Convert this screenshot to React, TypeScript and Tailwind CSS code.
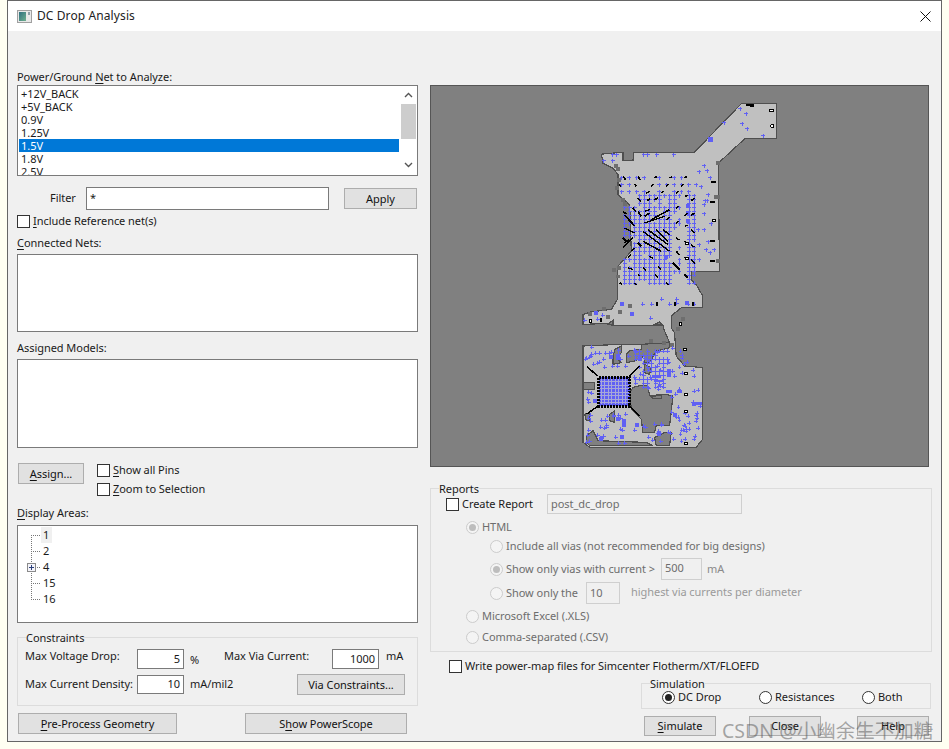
import React from "react";

const pts = (a: number[][]) => a.map((p) => p.join(",")).join(" ");
const U = (x: number, y: number) => [570 + x / 3, 95 + y / 3];
const L = (x: number, y: number) => [570 + x / 3, 300 + y / 3];

const board = [
  U(517, 25), U(622, 25), U(622, 130), U(528, 130), U(447, 205), U(450, 530), U(365, 530), U(365, 555), U(380, 570), U(400, 605),
  L(400, 25), L(335, 25), L(305, 50), L(305, 85), L(315, 100), L(320, 170), L(345, 200), L(400, 205), L(400, 420), L(380, 445), L(60, 445), L(40, 430), L(40, 140),
  L(155, 135), L(215, 135), L(300, 130), L(285, 95), L(280, 78), L(130, 78), L(115, 72), L(40, 75), L(40, 45), L(65, 37), L(125, 30), L(143, 0),
  U(145, 515), U(185, 470), U(180, 330), U(145, 300), U(145, 240), U(130, 220), U(100, 205), U(95, 178), U(160, 172), U(160, 198), U(190, 198), U(192, 172), U(375, 172),
];
const voids = [
  [L(135, 150), L(155, 140), L(155, 160), L(140, 175), L(155, 190), L(130, 195), L(130, 175)],
  [L(180, 155), L(215, 150), L(215, 135), L(300, 130), L(300, 145), L(260, 155), L(240, 190), L(225, 190), L(225, 170), L(195, 185), L(170, 190), L(170, 165)],
  [L(190, 265), L(215, 258), L(235, 260), L(240, 290), L(285, 285), L(310, 290), L(305, 340), L(300, 380), L(260, 380), L(255, 400), L(220, 400), L(215, 360), L(185, 330), L(180, 280)],
  [L(50, 430), L(50, 410), L(70, 395), L(85, 425), L(230, 430), L(250, 440), L(60, 440)],
  [L(255, 415), L(285, 400), L(305, 400), L(300, 440), L(260, 440)],
  [L(40, 250), L(75, 250), L(75, 270), L(40, 270)],
  [L(45, 345), L(60, 340), L(60, 365), L(50, 365)],
  [L(120, 345), L(135, 335), L(135, 370), L(120, 365)],
  [L(115, 75), L(130, 62), L(130, 78)],
  [L(225, 195), L(245, 205), L(240, 225), L(225, 220)],
  [L(255, 75), L(270, 68), L(280, 78)],
  [L(245, 292), L(275, 288), L(275, 298), L(250, 298)],
];

let seed = 7;
const rnd = () => {
  seed = (seed * 16807) % 2147483647;
  return seed / 2147483647;
};

const vias: number[][] = [];
for (let x = 625; x < 697; x += 5) for (let y = 196; y < 287; y += 4) {
  const w = x < 674 || (x > 685 && x < 697);
  if (x < 632 && y > 238 && y < 258) continue;
  if (y < 205 && x < 640) continue;
  if (rnd() < (w ? 0.92 : 0.2)) vias.push([x, y]);
}
for (const y of [178, 185, 192]) for (let x = 622; x < 700; x += 7.5) if (rnd() < 0.7) vias.push([x, y]);
[[613, 155], [617, 155], [613, 161], [644, 155], [648, 155], [657, 155], [674, 155], [604, 161], [705, 166], [700, 172], [708, 171], [711, 178], [702, 187], [709, 195], [708, 201], [705, 205], [706, 201], [705, 214], [712, 224], [699, 230], [705, 230], [709, 242], [700, 245], [707, 250], [715, 250], [700, 260], [711, 253], [725, 123], [741, 109], [747, 114], [743, 124], [748, 129], [764, 136], [662, 300], [677, 300], [677, 304], [643, 305], [652, 305], [670, 305], [689, 305], [695, 305], [585, 321], [603, 316], [598, 320], [651, 319]].forEach((v) => vias.push(v));
for (let i = 0; i < 190; i++) {
  const x = 586 + rnd() * 115;
  const y = 348 + rnd() * 96;
  if (x > 594 && x < 634 && y > 372 && y < 412) continue;
  if (x > 632 && x < 672 && y > 390 && y < 425) continue;
  vias.push([Math.round(x), Math.round(y)]);
}
for (let x = 636; x < 672; x += 4) for (let y = 352; y < 392; y += 4) if (rnd() < 0.6) vias.push([x, y]);

const blobs = [[711, 140, 2.5], [688, 304, 2], [622, 305, 2], [632, 315, 2], [596, 314, 2], [666, 257, 2], [689, 206, 2], [689, 213, 2], [689, 221, 2], [611, 358, 2], [640, 360, 2], [618, 420, 2], [637, 426, 2], [595, 402, 2], [659, 435, 2], [675, 416, 2], [622, 438, 2], [601, 440, 2], [695, 405, 2]];
const bars = [[652, 376, 9, 3], [654, 381, 10, 2], [666, 391, 6, 3], [677, 391, 6, 3], [697, 403, 6, 3], [667, 370, 4, 8], [616, 355, 4, 6], [622, 420, 4, 8], [600, 437, 4, 3]];
const edge = [[616, 166], [618, 169], [619, 180], [617, 188], [623, 200], [625, 204], [619, 268], [614, 270], [618, 277], [719, 163], [719, 197], [717, 197], [719, 261], [604, 310], [590, 315], [630, 307], [608, 318], [651, 342], [664, 344], [672, 346], [684, 320], [678, 330], [620, 313]];

const seg = (z: number[][]) => z.map(([a, b, c, d]) => [...U(a, b), ...U(c, d)]);
const blackSegs = [
  ...seg([
    [220, 410, 300, 470], [235, 405, 295, 450], [220, 440, 275, 470], [260, 405, 295, 440], [280, 405, 300, 420],
    [165, 360, 195, 395], [165, 400, 195, 415], [205, 310, 215, 320], [205, 350, 215, 365], [190, 340, 200, 350], [175, 375, 190, 385],
    [225, 350, 240, 345], [245, 375, 300, 345], [225, 385, 285, 365], [290, 375, 300, 368], [255, 315, 265, 310], [232, 318, 242, 312], [225, 365, 240, 355],
    [345, 440, 355, 448], [365, 450, 375, 458], [345, 487, 355, 495], [365, 495, 378, 507], [365, 405, 375, 415], [320, 430, 330, 437], [320, 470, 330, 480], [310, 505, 330, 525], [265, 515, 275, 525], [220, 520, 230, 528], [175, 520, 190, 525], [255, 540, 265, 548], [345, 540, 355, 550], [150, 565, 158, 570], [195, 565, 200, 572], [290, 565, 297, 570], [205, 540, 210, 545], [160, 460, 190, 430], [185, 470, 195, 460],
    [160, 245, 168, 255], [205, 245, 212, 255], [255, 250, 262, 245], [300, 250, 308, 245], [345, 250, 352, 245], [148, 268, 155, 275], [195, 268, 200, 275], [245, 275, 252, 268], [290, 275, 297, 268], [335, 275, 342, 268], [230, 295, 240, 290], [275, 295, 282, 290], [320, 295, 327, 290], [345, 305, 355, 302], [365, 318, 375, 310], [345, 365, 355, 355], [365, 362, 375, 355], [320, 340, 328, 335], [320, 385, 328, 380], [345, 395, 355, 392],
    [160, 350, 170, 358], [160, 430, 170, 440], [165, 445, 178, 435], [205, 445, 215, 455], [240, 485, 250, 492], [175, 490, 185, 480],
  ]),
  [587, 367, 598, 377], [640, 367, 630, 377], [587, 415, 598, 407], [640, 417, 630, 407],
];

const pads = [[712, 181, 5, 2], [711, 201, 5, 2], [711, 240, 5, 2], [711, 260, 5, 2], [656, 303, 2, 4], [674, 303, 2, 4], [693, 303, 2, 4], [600, 319, 2, 4]];
const holes = [[713, 220, 3, 2], [751, 105, 3, 2], [770, 110, 4, 2], [590, 320, 2, 3], [680, 323, 2, 3], [684, 349, 3, 2], [685, 373, 3, 2], [685, 394, 3, 2], [685, 411, 3, 2], [685, 443, 3, 2], [686, 243, 3, 2], [686, 258, 3, 2]];

function Board() {
  return (
    <svg viewBox="431 86 498 381" className="block w-full h-full" shapeRendering="crispEdges">
      <polygon points={pts(board)} fill="#c0c0c0" stroke="#4f4f4f" strokeWidth="1.2" />
      {voids.map((v, i) => <polygon key={i} points={pts(v)} fill="#808080" stroke="#4f4f4f" strokeWidth="1.2" />)}
      {edge.map(([x, y], i) => <rect key={i} x={x - 2} y={y - 2} width={4} height={4} fill="#6e6e6e" />)}
      {vias.map(([x, y], i) => (
        <g key={i} fill="#6060f4">
          <rect x={x - 2} y={y - 0.5} width={4} height={1} />
          <rect x={x - 0.5} y={y - 2} width={1} height={4} />
        </g>
      ))}
      {blobs.map(([x, y, r], i) => <rect key={i} x={x - r} y={y - r} width={r * 2} height={r * 2} fill="#6060f4" />)}
      {bars.map(([x, y, w, h], i) => <rect key={i} x={x} y={y} width={w} height={h} fill="#6060f4" />)}
      {blackSegs.map(([a, b, c, d], i) => <line key={i} x1={a} y1={b} x2={c} y2={d} stroke="#000" strokeWidth="1.5" />)}
      {pads.map(([x, y, w, h], i) => <rect key={i} x={x} y={y} width={w} height={h} fill="#000" />)}
      {holes.map(([x, y, w, h], i) => <rect key={i} x={x} y={y} width={w} height={h} fill="#fff" stroke="#000" strokeWidth="1" />)}
      <rect x="747" y="104" width="7" height="2" fill="#000" />
      <circle cx="773" cy="126" r="1.7" fill="#fff" stroke="#000" />
      <rect x="599" y="378" width="31" height="29" fill="#6060f4" stroke="#000" strokeWidth="3" strokeDasharray="2 1" />
      {[0, 1, 2, 3, 4, 5, 6, 7].map((i) => <rect key={i} x={601 + i * 3.5} y={380} width="1" height="25" fill="#a8a8d8" />)}
      {[0, 1, 2, 3, 4, 5, 6].map((i) => <rect key={i} x={600} y={382 + i * 3.5} width="29" height="1" fill="#a8a8d8" />)}
    </svg>
  );
}

const U_ = ({ c }: { c: string }) => <span className="underline underline-offset-2">{c}</span>;

function Btn({ className, children }: { className: string; children: React.ReactNode }) {
  return (
    <button className={`flex items-center justify-center bg-[#e1e1e1] border border-[#adadad] text-[#111] shrink-0 ${className}`}>{children}</button>
  );
}

function Check({ children, className = "" }: { children: React.ReactNode; className?: string }) {
  return (
    <div className={`flex items-center h-[14px] ${className}`}>
      <span className="w-[13px] h-[13px] bg-white border border-[#333] shrink-0" />
      <span className="ml-[3px] whitespace-nowrap">{children}</span>
    </div>
  );
}

function Radio({ on, off, children, className = "" }: { on?: boolean; off?: boolean; children: React.ReactNode; className?: string }) {
  return (
    <div className={`flex items-center ${className}`}>
      <span className={`w-[13px] h-[13px] rounded-full border flex items-center justify-center shrink-0 ${off ? "border-[#cccccc] bg-[#f4f4f4]" : "border-[#333] bg-white"}`}>
        {on && <span className={`w-[7px] h-[7px] rounded-full ${off ? "bg-[#bdbdbd]" : "bg-[#222]"}`} />}
      </span>
      <span className={`ml-[3px] whitespace-nowrap ${off ? "text-[#6d6d6d]" : ""}`}>{children}</span>
    </div>
  );
}

function Group({ title, className, children }: { title: string; className: string; children: React.ReactNode }) {
  return (
    <div className={`relative border border-[#dcdcdc] ${className}`}>
      <span className="absolute -top-[7px] left-[8px] bg-[#f0f0f0] leading-[14px] whitespace-nowrap">{title}</span>
      {children}
    </div>
  );
}

function TreeRow({ label, first, last, plus, sel }: { label: string; first?: boolean; last?: boolean; plus?: boolean; sel?: boolean }) {
  return (
    <div className="flex h-[16px] items-center">
      <svg width="23" height="16" className="shrink-0" shapeRendering="crispEdges">
        <line x1="13.5" y1={first ? 8 : 0} x2="13.5" y2={last ? 8 : 16} stroke="#777" strokeDasharray="1 1" />
        <line x1="13" y1="8.5" x2="23" y2="8.5" stroke="#777" strokeDasharray="1 1" />
        {plus && (
          <g>
            <rect x="9.5" y="4.5" width="8" height="8" fill="#f4f4fa" stroke="#8a8a8a" />
            <rect x="11" y="8" width="5" height="1" fill="#2b3f7a" />
            <rect x="13" y="6" width="1" height="5" fill="#2b3f7a" />
          </g>
        )}
      </svg>
      <span className={`h-[16px] leading-[16px] pl-[2px] pr-[3px] ${sel ? "bg-[#f0f0f0]" : ""}`}>{label}</span>
    </div>
  );
}

const inputCls = "bg-white border border-[#7a7a7a] flex items-center shrink-0";

export default function App() {
  const items = ["+12V_BACK", "+5V_BACK", "0.9V", "1.25V", "1.5V", "1.8V", "2.5V"];
  return (
    <div className="relative w-[949px] h-[749px] bg-[#fffff2] overflow-hidden text-[11px] text-[#1a1a1a] tracking-[-0.05px]" style={{ fontFamily: '"Noto Sans", "Noto Sans CJK SC", sans-serif' }}>
      <div className="ml-[7px] w-[935px] h-[742px] border border-[#666] bg-[#f0f0f0] flex flex-col">
        <div className="h-[30px] bg-white flex items-center shrink-0">
          <svg width="15" height="13" className="ml-[9px] shrink-0" viewBox="0 0 15 13">
            <defs>
              <linearGradient id="ic" x1="0" y1="0" x2="1" y2="1">
                <stop offset="0" stopColor="#2f6f7f" />
                <stop offset="1" stopColor="#6fb08f" />
              </linearGradient>
            </defs>
            <rect x="0.5" y="0.5" width="14" height="12" fill="#e8e8e8" stroke="#a0a0a0" />
            <rect x="2" y="2" width="7" height="9" fill="url(#ic)" />
            <rect x="11" y="2" width="2" height="3" fill="#8f9fa8" />
          </svg>
          <span className="ml-[5px] text-[12px] tracking-[0.1px] text-[#222]">DC Drop Analysis</span>
          <svg width="11" height="11" className="ml-auto mr-[10px]" viewBox="0 0 11 11">
            <path d="M0.5 0.5L10.5 10.5M10.5 0.5L0.5 10.5" stroke="#111" strokeWidth="1" />
          </svg>
        </div>

        <div className="flex pl-[9px]">
          {/* left column */}
          <div className="w-[401px] shrink-0 flex flex-col pt-[39px]">
            <div className="h-[14px] leading-[14px]">Power/Ground <U_ c="N" />et to Analyze:</div>
            <div className="mt-[1px] h-[91px] bg-white border border-[#7a7a7a] flex overflow-hidden">
              <div className="flex-1 pt-[1px] pl-[1px]">
                {items.map((t, i) => (
                  <div key={t} className={`h-[13px] leading-[13px] pl-[2px] ${i === 4 ? "bg-[#0078d7] text-white" : ""}`}>{t}</div>
                ))}
              </div>
              <div className="w-[18px] shrink-0 flex flex-col items-center pt-[6px]">
                <svg width="9" height="6" viewBox="0 0 9 6"><path d="M1 5L4.5 1.5L8 5" fill="none" stroke="#555" strokeWidth="1.4" /></svg>
                <div className="mt-[6px] w-[15px] h-[35px] bg-[#cdcdcd] shrink-0" />
                <svg width="9" height="6" viewBox="0 0 9 6" className="mt-[23px]"><path d="M1 1L4.5 4.5L8 1" fill="none" stroke="#555" strokeWidth="1.4" /></svg>
              </div>
            </div>
            <div className="mt-[11px] h-[23px] flex items-center">
              <span className="ml-[33px] w-[36px]">Filter</span>
              <div className={`${inputCls} w-[243px] h-[23px] pl-[3px]`}>*</div>
              <Btn className="ml-[15px] w-[73px] h-[21px] pt-[1px]">Apply</Btn>
            </div>
            <Check className="mt-[4px]"><U_ c="I" />nclude Reference net(s)</Check>
            <div className="mt-[8px] h-[14px] leading-[14px]"><U_ c="C" />onnected Nets:</div>
            <div className="mt-[4px] h-[78px] bg-white border border-[#7a7a7a]" />
            <div className="mt-[9px] h-[14px] leading-[14px]">Assigned Models:</div>
            <div className="mt-[4px] h-[89px] bg-white border border-[#7a7a7a]" />
            <div className="mt-[15px] h-[33px] flex items-start">
              <Btn className="ml-[1px] w-[66px] h-[21px] pt-[1px]"><span><U_ c="A" />ssign...</span></Btn>
              <div className="ml-[13px] flex flex-col gap-[5px]">
                <Check><U_ c="S" />how all Pins</Check>
                <Check><U_ c="Z" />oom to Selection</Check>
              </div>
            </div>
            <div className="mt-[10px] h-[14px] leading-[14px]"><U_ c="D" />isplay Areas:</div>
            <div className="mt-[5px] h-[98px] bg-white border border-[#7a7a7a] pt-[1px]">
              <TreeRow label="1" first sel />
              <TreeRow label="2" />
              <TreeRow label="4" plus />
              <TreeRow label="15" />
              <TreeRow label="16" last />
            </div>
            <Group title="Constraints" className="mt-[14px] h-[69px] flex flex-col pl-[7px]">
              <div className="flex items-start mt-[11px] h-[20px]">
                <span className="w-[112px] leading-[14px] whitespace-nowrap">Max Voltage Drop:</span>
                <div className={`${inputCls} w-[47px] h-[20px] justify-end pr-[3px]`}>5</div>
                <span className="ml-[6px] w-[34px] mt-[3px]">%</span>
                <span className="w-[108px] leading-[14px] whitespace-nowrap">Max Via Current:</span>
                <div className={`${inputCls} w-[47px] h-[20px] justify-end pr-[3px]`}>1000</div>
                <span className="ml-[7px] leading-[14px]">mA</span>
              </div>
              <div className="flex items-center mt-[5px] h-[21px]">
                <span className="w-[112px] whitespace-nowrap">Max Current Density:</span>
                <div className={`${inputCls} w-[47px] h-[19px] justify-end pr-[3px]`}>10</div>
                <span className="ml-[6px] w-[107px]">mA/mil2</span>
                <Btn className="w-[108px] h-[21px] pt-[1px]">Via Constraints...</Btn>
              </div>
            </Group>
            <div className="mt-[7px] flex">
              <Btn className="ml-[1px] w-[159px] h-[21px] pt-[1px]"><span><U_ c="P" />re-Process Geometry</span></Btn>
              <Btn className="ml-[68px] w-[162px] h-[21px] pt-[1px]"><span>S<U_ c="h" />ow PowerScope</span></Btn>
            </div>
          </div>

          {/* right column */}
          <div className="ml-[12px] w-[502px] shrink-0 flex flex-col pt-[54px]">
            <div className="w-[499px] h-[382px] bg-[#808080] border border-[#555]">
              <Board />
            </div>
            <Group title="Reports" className="mt-[21px] h-[164px] flex flex-col">
              <div className="mt-[5px] h-[20px] flex items-center pl-[15px]">
                <Check className="w-[101px]">Create Report</Check>
                <div className="w-[195px] h-[20px] border border-[#cfcfcf] bg-[#f0f0f0] flex items-center pl-[3px] text-[#6d6d6d]">post_dc_drop</div>
              </div>
              <Radio on off className="mt-[6px] h-[14px] pl-[35px]">HTML</Radio>
              <Radio off className="mt-[5px] h-[14px] pl-[59px]">Include all vias (not recommended for big designs)</Radio>
              <div className="mt-[5px] h-[22px] flex items-center pl-[59px]">
                <Radio on off className="w-[166px]">Show only vias with current &gt;</Radio>
                <div className="ml-[5px] w-[41px] h-[22px] border border-[#cfcfcf] flex items-center pl-[3px] pb-[2px] text-[#6d6d6d]">500</div>
                <span className="ml-[5px] text-[#8a8a8a]">mA</span>
              </div>
              <div className="mt-[2px] h-[22px] flex items-center pl-[59px]">
                <Radio off className="w-[90px]">Show only the</Radio>
                <div className="ml-[6px] w-[34px] h-[22px] border border-[#cfcfcf] flex items-center pl-[3px] text-[#6d6d6d]">10</div>
                <span className="ml-[11px] pb-[2px] text-[#9a9a9a]">highest via currents per diameter</span>
              </div>
              <Radio off className="mt-[5px] h-[14px] pl-[35px]">Microsoft Excel (.XLS)</Radio>
              <Radio off className="mt-[7px] h-[14px] pl-[35px]">Comma-separated (.CSV)</Radio>
            </Group>
            <Check className="mt-[7px] ml-[19px]">Write power-map files for Simcenter Flotherm/XT/FLOEFD</Check>
            <Group title="Simulation" className="mt-[10px] ml-[211px] w-[290px] h-[26px] flex items-center">
              <Radio on className="ml-[20px] w-[97px] mt-[3px]">DC Drop</Radio>
              <Radio className="w-[103px] mt-[3px]">Resistances</Radio>
              <Radio className="mt-[3px]">Both</Radio>
            </Group>
            <div className="mt-[7px] flex ml-[214px]">
              <Btn className="w-[72px] h-[20px]"><span><U_ c="S" />imulate</span></Btn>
              <Btn className="ml-[33px] w-[72px] h-[20px]">Close</Btn>
              <Btn className="ml-[36px] w-[72px] h-[20px]">Help</Btn>
            </div>
          </div>
        </div>
      </div>
      <span className="absolute left-[722px] top-[716px] text-[19.5px] tracking-normal text-[#555]/50 whitespace-nowrap">CSDN @小幽余生不加糖</span>
    </div>
  );
}
